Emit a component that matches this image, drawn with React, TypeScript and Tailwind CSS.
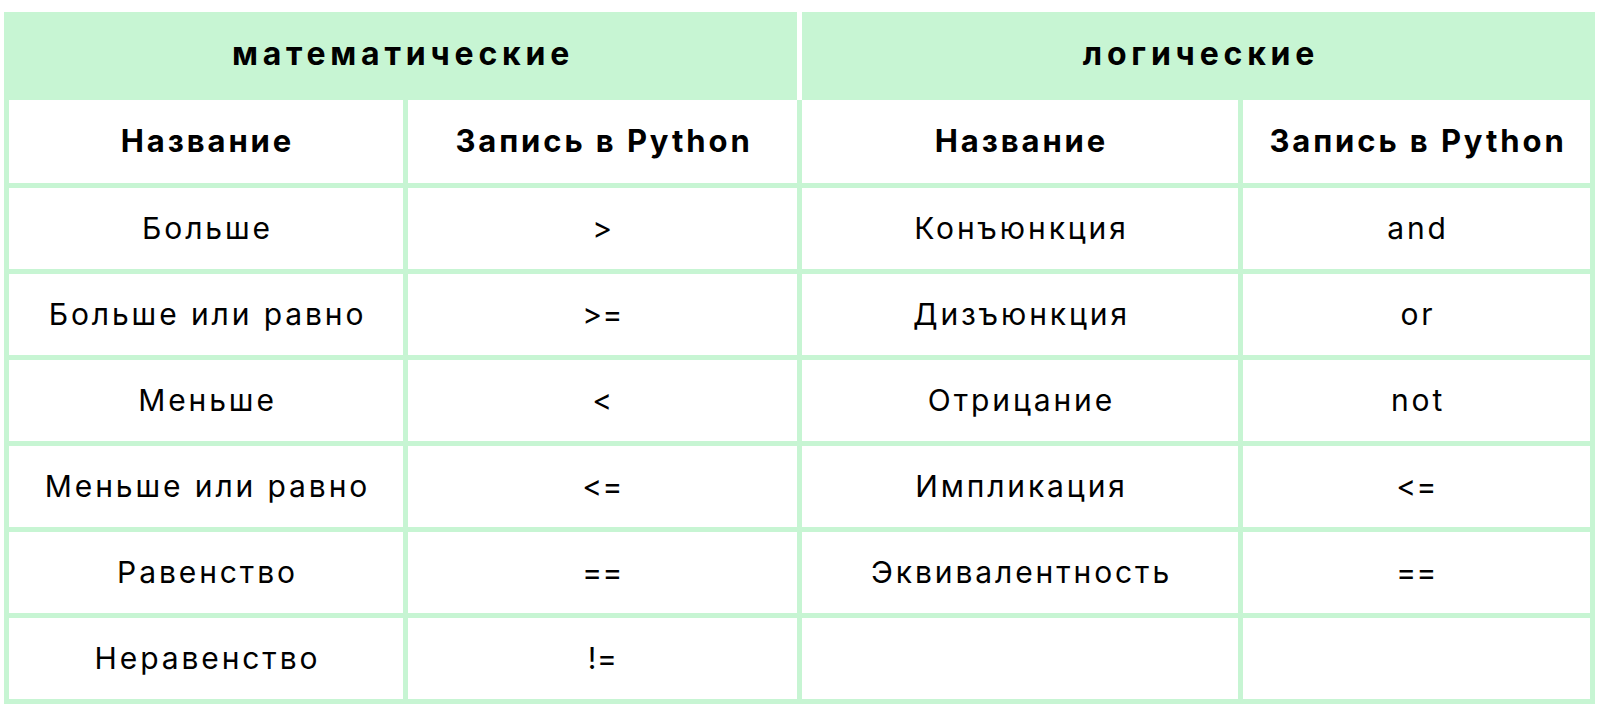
const math = [
  ["Больше", ">"],
  ["Больше или равно", ">="],
  ["Меньше", "<"],
  ["Меньше или равно", "<="],
  ["Равенство", "=="],
  ["Неравенство", "!="],
];

const logic = [
  ["Конъюнкция", "and"],
  ["Дизъюнкция", "or"],
  ["Отрицание", "not"],
  ["Импликация", "<="],
  ["Эквивалентность", "=="],
  ["", ""],
];

const Cell = ({ children, bold = false }: { children?: React.ReactNode; bold?: boolean }) => (
  <div
    className={`bg-white flex items-center justify-center text-black ${
      bold ? "text-[31px] font-bold tracking-[2.9px] pl-[3px]" : "text-[30px] font-normal tracking-[2.9px] pl-[3px]"
    }`}
  >
    {children}
  </div>
);

// operators sit tight together in the picture
const Op = ({ children }: { children?: React.ReactNode }) => (
  <div className="bg-white flex items-center justify-center text-black text-[30px] font-normal tracking-[0.5px]">
    {children}
  </div>
);

const isOp = (s: string) => /^[<>=!]+$/.test(s);

export default function App() {
  return (
    <div className="min-h-screen bg-white pt-[12px] pl-[4px]" style={{ fontFamily: "Inter, 'Noto Sans', sans-serif" }}>
      <div className="w-[1591px]">
        <div className="flex gap-[5px] h-[88px]">
          <div className="flex-1 bg-[#c7f5d3] flex items-center justify-center text-[32px] font-bold tracking-[4.8px] pl-[5px] text-black pb-[4px]">
            математические
          </div>
          <div className="flex-1 bg-[#c7f5d3] flex items-center justify-center text-[32px] font-bold tracking-[4.8px] pl-[5px] text-black pb-[4px]">
            логические
          </div>
        </div>
        <div className="bg-[#c7f5d3] px-[5px] pb-[5px] grid grid-cols-[394px_389px_436px_347px] grid-rows-[83px_repeat(6,81px)] gap-[5px]">
          <Cell bold>Название</Cell>
          <Cell bold>Запись в Python</Cell>
          <Cell bold>Название</Cell>
          <Cell bold>Запись в Python</Cell>
          {math.map((m, i) => (
            <div key={i} className="contents">
              <Cell>{m[0]}</Cell>
              <Op>{m[1]}</Op>
              <Cell>{logic[i][0]}</Cell>
              {isOp(logic[i][1]) ? <Op>{logic[i][1]}</Op> : <Cell>{logic[i][1]}</Cell>}
            </div>
          ))}
        </div>
      </div>
    </div>
  );
}
